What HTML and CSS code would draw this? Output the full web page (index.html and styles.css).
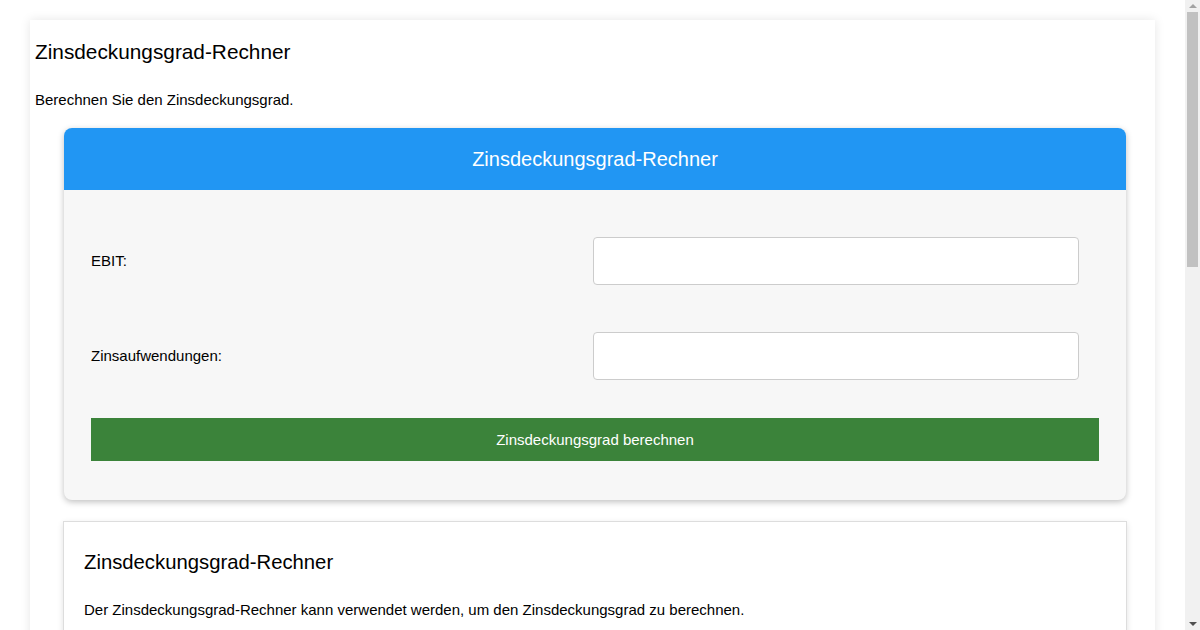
FILE: index.html
```html
<!DOCTYPE html>
<html lang="de">
<head>
    <meta charset="UTF-8">
    <meta name="viewport" content="width=device-width, initial-scale=1.0">
    <title>Zinsdeckungsgrad-Rechner</title>
    <link rel="stylesheet" href="styles.css">
</head>
<body>
    <div class="page">
        <h1 class="page-title">Zinsdeckungsgrad-Rechner</h1>
        <p class="page-intro">Berechnen Sie den Zinsdeckungsgrad.</p>

        <div class="calculator">
            <div class="calculator-header">Zinsdeckungsgrad-Rechner</div>
            <div class="calculator-body">
                <div class="form-row">
                    <label for="ebit">EBIT:</label>
                    <input type="number" id="ebit">
                </div>
                <div class="form-row">
                    <label for="interest">Zinsaufwendungen:</label>
                    <input type="number" id="interest">
                </div>
                <button class="calc-btn" type="button">Zinsdeckungsgrad berechnen</button>
            </div>
        </div>

        <div class="info-card">
            <h2>Zinsdeckungsgrad-Rechner</h2>
            <p>Der Zinsdeckungsgrad-Rechner kann verwendet werden, um den Zinsdeckungsgrad zu berechnen.</p>
            <p>Der Zinsdeckungsgrad gibt an, wie oft ein Unternehmen seine Zinsaufwendungen mit seinem operativen Ergebnis (EBIT) decken kann.</p>
            <h3>Formel</h3>
            <p>Zinsdeckungsgrad = EBIT / Zinsaufwendungen</p>
            <h3>Beispiel</h3>
            <p>Ein Unternehmen hat ein EBIT von 500.000 € und Zinsaufwendungen von 100.000 €. Der Zinsdeckungsgrad beträgt 5.</p>
            <p>Je höher der Zinsdeckungsgrad, desto besser kann das Unternehmen seine Zinsen bedienen.</p>
        </div>
    </div>

    <!-- browser scrollbar, drawn since the screenshot hides the real one -->
    <div class="fake-scrollbar">
        <span class="arrow arrow-up"></span>
        <div class="thumb"></div>
        <span class="arrow arrow-down"></span>
    </div>
</body>
</html>
```

FILE: styles.css
```css
* {
    box-sizing: border-box;
}

body {
    font-family: "Liberation Sans", Arial, sans-serif;
    margin: 0;
    padding: 0;
    background: #ffffff;
    color: #000000;
}

.page {
    margin: 20px 45px 20px 30px;
    padding: 0 5px 40px 5px;
    background: #ffffff;
    box-shadow: 0 0 10px rgba(0, 0, 0, 0.1);
    min-height: 1420px;
}

.page-title {
    font-size: 20.8px;
    font-weight: normal;
    margin: 0;
    padding-top: 20px;
}

.page-intro {
    font-size: 15px;
    margin: 27px 0 0 0;
}

.calculator {
    width: 1062px;
    margin: 20px 0 0 29px;
    border-radius: 8px;
    overflow: hidden;
    background: #f7f7f7;
    box-shadow: 0 2px 6px rgba(0, 0, 0, 0.25);
}

.calculator-header {
    background: #2196f3;
    color: #ffffff;
    font-size: 20px;
    text-align: center;
    height: 62px;
    line-height: 62px;
}

.calculator-body {
    padding: 47px 27px 39px 27px;
}

.form-row {
    display: flex;
    align-items: center;
    margin-bottom: 47px;
}

.form-row:last-of-type {
    margin-bottom: 38px;
}

.form-row label {
    flex: 1;
    font-size: 15px;
    padding-bottom: 1px;
}

.form-row input {
    width: 486px;
    height: 48px;
    margin-right: 20px;
    border: 1px solid #cccccc;
    border-radius: 4px;
    background: #ffffff;
    font-size: 15px;
    padding: 0 10px;
}

.calc-btn {
    display: block;
    width: 100%;
    height: 43px;
    border: none;
    border-radius: 0;
    background: #3b833a;
    color: #ffffff;
    font-family: inherit;
    font-size: 15px;
    cursor: pointer;
}

.info-card {
    width: 1064px;
    margin: 21px 0 0 28px;
    padding: 8px 20px 20px 20px;
    background: #ffffff;
    border: 1px solid #dddddd;
    box-shadow: 0 2px 6px rgba(0, 0, 0, 0.12);
}

.info-card h2 {
    font-size: 20.3px;
    font-weight: normal;
    margin: 21px 0 0 0;
}

.info-card h3 {
    font-size: 17px;
    font-weight: normal;
    margin: 27px 0 0 0;
}

.info-card p {
    font-size: 15px;
    margin: 27px 0 0 0;
    line-height: 17px;
}

/* Scrollbar */
.fake-scrollbar {
    position: fixed;
    top: 0;
    right: 0;
    width: 15px;
    height: 100vh;
    background: #f1f1f1;
    z-index: 1000;
}

.fake-scrollbar .thumb {
    position: absolute;
    top: 12px;
    left: 2px;
    width: 11px;
    height: 255px;
    background: #c1c1c1;
}

.fake-scrollbar .arrow {
    position: absolute;
    left: 4px;
    width: 0;
    height: 0;
    border-left: 4px solid transparent;
    border-right: 4px solid transparent;
}

.fake-scrollbar .arrow-up {
    top: 4px;
    border-bottom: 4px solid #a3a3a3;
}

.fake-scrollbar .arrow-down {
    bottom: 4px;
    border-top: 4px solid #505050;
}
```
